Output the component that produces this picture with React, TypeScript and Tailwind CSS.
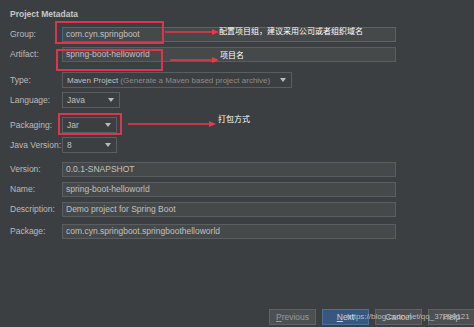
import React from "react";

const font = { fontFamily: '"Liberation Sans", "Noto Sans CJK SC", sans-serif' };

function Field({ text, width, focused }: { text: string; width: string; focused?: boolean }) {
  return (
    <div
      className={`h-[15px] ${width} flex items-center pl-[3px] bg-[#45494a] border ${
        focused ? "border-[#41688f]" : "border-[#5b5e60]"
      } text-[#c0c0c0]`}
    >
      {text}
    </div>
  );
}

function Combo({ children, width }: { children: React.ReactNode; width: string }) {
  return (
    <div
      className={`h-[16px] ${width} flex items-center justify-between pl-[4px] pr-[5px] bg-[#3c3f41] border border-[#5b5e60] text-[#c0c0c0]`}
    >
      <span className="whitespace-nowrap">{children}</span>
      <svg width="6" height="4" viewBox="0 0 6 4" className="shrink-0">
        <path d="M0 0 L6 0 L3 4 Z" fill="#bbbbbb" />
      </svg>
    </div>
  );
}

function Row({ label, children, mt }: { label: string; children: React.ReactNode; mt: string }) {
  return (
    <div className={`flex items-center ${mt}`}>
      <div className="w-[52px] shrink-0 text-[#bbbbbb] whitespace-nowrap">{label}</div>
      {children}
    </div>
  );
}

function Arrow({ x1, x2, y }: { x1: number; x2: number; y: number }) {
  return (
    <svg
      className="absolute"
      style={{ left: x1, top: y - 4 }}
      width={x2 - x1}
      height={8}
      viewBox={`0 0 ${x2 - x1} 8`}
    >
      <line x1="0" y1="4" x2={x2 - x1 - 6} y2="4" stroke="#e8394b" strokeWidth="1.6" />
      <path d={`M${x2 - x1 - 7} 1 L${x2 - x1} 4 L${x2 - x1 - 7} 7 Z`} fill="#e8394b" />
    </svg>
  );
}

export default function App() {
  return (
    <div
      className="relative w-[474px] h-[327px] overflow-hidden bg-[#3c3f41] text-[8.5px] leading-none"
      style={font}
    >
      <div className="pl-[10px] pt-[10px] flex flex-col">
        <div className="font-bold text-[#c8c8c8] h-[9px]">Project Metadata</div>
        <Row label="Group:" mt="mt-[8px]">
          <Field text="com.cyn.springboot" width="w-[334px]" focused />
        </Row>
        <Row label="Artifact:" mt="mt-[5px]">
          <Field text="spring-boot-helloworld" width="w-[334px]" />
        </Row>
        <Row label="Type:" mt="mt-[10px]">
          <Combo width="w-[230px]">
            <span className="text-[8px]">
              Maven Project <span className="text-[#8c8c8c]">(Generate a Maven based project archive)</span>
            </span>
          </Combo>
        </Row>
        <Row label="Language:" mt="mt-[4px]">
          <Combo width="w-[58px]">Java</Combo>
        </Row>
        <Row label="Packaging:" mt="mt-[9px]">
          <Combo width="w-[55px]">Jar</Combo>
        </Row>
        <Row label="Java Version:" mt="mt-[4px]">
          <Combo width="w-[55px]">8</Combo>
        </Row>
        <Row label="Version:" mt="mt-[9px]">
          <Field text="0.0.1-SNAPSHOT" width="w-[334px]" />
        </Row>
        <Row label="Name:" mt="mt-[5px]">
          <Field text="spring-boot-helloworld" width="w-[334px]" />
        </Row>
        <Row label="Description:" mt="mt-[5px]">
          <Field text="Demo project for Spring Boot" width="w-[334px]" />
        </Row>
        <Row label="Package:" mt="mt-[7px]">
          <Field text="com.cyn.springboot.springboothelloworld" width="w-[334px]" />
        </Row>
      </div>

      {/* bottom buttons */}
      <div className="absolute left-[269px] top-[309px] flex gap-[6px] whitespace-nowrap">
        <div className="w-[47px] h-[16px] flex items-center justify-center bg-[#4c5052] border border-[#5e6263] text-[#9a9a9a]">
          <span><span className="underline">P</span>revious</span>
        </div>
        <div className="w-[47px] h-[16px] flex items-center justify-center bg-[#365880] border border-[#4c709a] text-[#d0d0d0]">
          <span><span className="underline">N</span>ext</span>
        </div>
        <div className="w-[47px] h-[16px] flex items-center justify-center bg-[#4c5052] border border-[#5e6263] text-[#bbbbbb]">
          Cancel
        </div>
        <div className="w-[47px] h-[16px] flex items-center justify-center bg-[#4c5052] border border-[#5e6263] text-[#bbbbbb]">
          Help
        </div>
      </div>
      <div className="absolute left-[347px] top-[313px] text-[8px] text-[#d8d8d8]/80 whitespace-nowrap">
        https://blog.csdn.net/qq_37299121
      </div>

      {/* annotations */}
      <div className="absolute left-[55px] top-[21px] w-[109px] h-[23px] border-2 border-[#e0344a]" />
      <div className="absolute left-[56px] top-[49px] w-[107px] h-[22px] border-2 border-[#e0344a]" />
      <div className="absolute left-[58px] top-[113px] w-[64px] h-[22px] border-2 border-[#e0344a]" />
      <Arrow x1={165} x2={219} y={32} />
      <Arrow x1={170} x2={219} y={60} />
      <Arrow x1={128} x2={216} y={124} />
      <div className="absolute left-[219px] top-[28px] text-[8px] text-white whitespace-nowrap">
        配置项目组，建议采用公司或者组织域名
      </div>
      <div className="absolute left-[220px] top-[52px] text-[8px] text-white whitespace-nowrap">
        项目名
      </div>
      <div className="absolute left-[218px] top-[116px] text-[8px] text-white whitespace-nowrap">
        打包方式
      </div>
    </div>
  );
}
